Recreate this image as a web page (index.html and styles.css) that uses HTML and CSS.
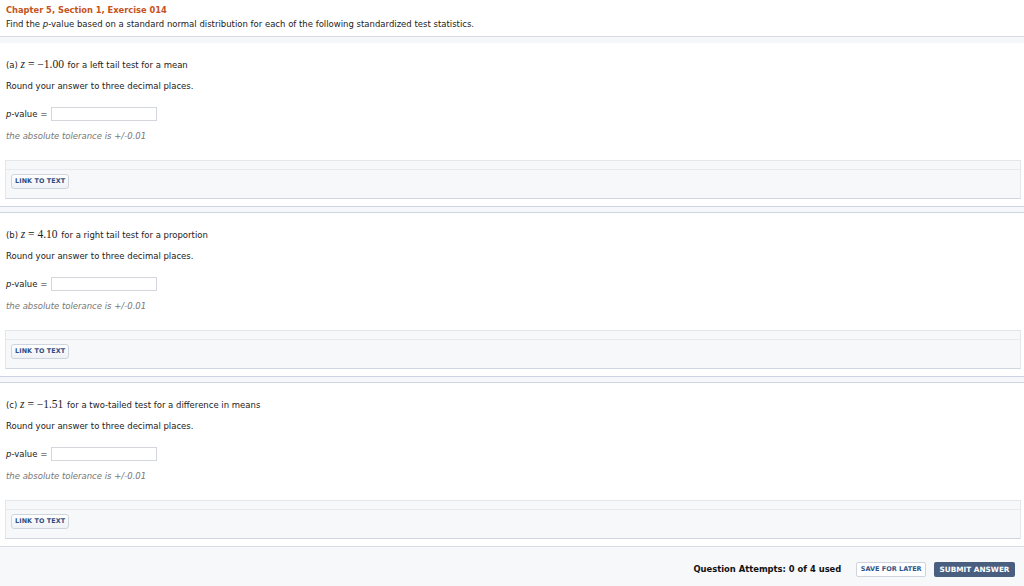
FILE: index.html
```html
<!DOCTYPE html>
<html>
<head>
<meta charset="utf-8">
<link rel="stylesheet" href="styles.css">
</head>
<body>
<div class="header">
  <div class="title">Chapter 5, Section 1, Exercise 014</div>
  <div class="desc">Find the <i>p</i>-value based on a standard normal distribution for each of the following standardized test statistics.</div>
</div>
<div class="band"></div>

<div class="part">
  <div class="q">(a) <span class="math"><i>z</i> = −1.00</span> for a left tail test for a mean</div>
  <div class="round">Round your answer to three decimal places.</div>
  <div class="ans"><span class="lbl"><i>p</i>-value =</span><span class="inp"></span></div>
  <div class="tol">the absolute tolerance is +/-0.01</div>
  <div class="box"><div class="boxhead"></div><div class="boxbody"><span class="btn">LINK TO TEXT</span></div></div>
  <div class="sep"></div>
</div>

<div class="part">
  <div class="q">(b) <span class="math"><i>z</i> = 4.10</span> for a right tail test for a proportion</div>
  <div class="round">Round your answer to three decimal places.</div>
  <div class="ans"><span class="lbl"><i>p</i>-value =</span><span class="inp"></span></div>
  <div class="tol">the absolute tolerance is +/-0.01</div>
  <div class="box"><div class="boxhead"></div><div class="boxbody"><span class="btn">LINK TO TEXT</span></div></div>
  <div class="sep"></div>
</div>

<div class="part">
  <div class="q">(c) <span class="math"><i>z</i> = −1.51</span> for a two-tailed test for a difference in means</div>
  <div class="round">Round your answer to three decimal places.</div>
  <div class="ans"><span class="lbl"><i>p</i>-value =</span><span class="inp"></span></div>
  <div class="tol">the absolute tolerance is +/-0.01</div>
  <div class="box"><div class="boxhead"></div><div class="boxbody"><span class="btn">LINK TO TEXT</span></div></div>
</div>

<div class="footer">
  <span class="attempts">Question Attempts: 0 of 4 used</span>
  <span class="save">SAVE FOR LATER</span>
  <span class="submit">SUBMIT ANSWER</span>
</div>
</body>
</html>
```
FILE: styles.css
```css
html, body {
  margin: 0;
  padding: 0;
  background: #fff;
}
body {
  font-family: "DejaVu Sans", Verdana, sans-serif;
  font-size: 8.5px;
  color: #222;
  height: 586px;
  overflow: hidden;
  display: flex;
  flex-direction: column;
}
.header {
  padding: 4px 6px 6px 6px;
  height: 26px;
  border-bottom: 1px solid #d6dde7;
}
.title {
  line-height: 12px;
  height: 12px;
  font-weight: bold;
  font-size: 8.3px;
  color: #c4531d;
}
.desc {
  margin-top: 2px;
  line-height: 12px;
  height: 12px;
}
.band {
  height: 6px;
  background: #f5f7fa;
}
.part {
  padding-top: 14px;
}
.q {
  padding-left: 6px;
  line-height: 14px;
  height: 14px;
  white-space: nowrap;
}
.math {
  font-family: "Liberation Serif", "Times New Roman", serif;
  font-size: 11.5px;
  margin-right: 1px;
}
.round {
  padding-left: 6px;
  margin-top: 9px;
  line-height: 12px;
  height: 12px;
}
.ans {
  margin-top: 15px;
  padding-left: 6px;
  height: 14px;
  display: flex;
  align-items: center;
}
.lbl {
  width: 45px;
  line-height: 14px;
}
.inp {
  width: 104px;
  height: 12px;
  border: 1px solid #d3d6db;
  background: #fff;
}
.tol {
  margin-top: 9px;
  padding-left: 6px;
  line-height: 12px;
  height: 12px;
  font-style: italic;
  color: #777;
}
.box {
  margin: 18px 3px 0 5px;
  border: 1px solid #e3e6eb;
  border-bottom-color: #cfd6e1;
  background: #f7f8fa;
}
.boxhead {
  height: 8px;
  border-bottom: 1px solid #e6e9ee;
}
.boxbody {
  height: 28px;
  padding-left: 5px;
  box-sizing: border-box;
  padding-top: 4px;
}
.btn {
  display: inline-block;
  height: 13px;
  line-height: 13px;
  padding: 0 3px;
  border: 1px solid #cfd5de;
  border-radius: 3px;
  background: linear-gradient(#ffffff, #eef1f6);
  font-size: 6.4px;
  font-weight: bold;
  color: #2f4f82;
  letter-spacing: 0.1px;
}
.sep {
  margin-top: 7px;
  height: 5px;
  border-top: 1px solid #ccd5e1;
  border-bottom: 1px solid #ccd5e1;
  background: #f5f7fa;
}
.footer {
  margin-top: 7px;
  flex: 1;
  border-top: 1px solid #d9dee6;
  background: #f7f8fa;
  display: flex;
  justify-content: flex-end;
  align-items: flex-start;
  padding: 15px 9px 0 0;
}
.attempts {
  font-weight: bold;
  font-size: 8.4px;
  line-height: 15px;
  color: #111;
  margin-right: 15px;
}
.save {
  display: inline-block;
  height: 13px;
  line-height: 13px;
  padding: 0 3.5px;
  border: 1px solid #cfd5de;
  border-radius: 2px;
  background: #fff;
  font-size: 6.5px;
  font-weight: bold;
  color: #34558a;
  margin-right: 8px;
}
.submit {
  display: inline-block;
  height: 15px;
  line-height: 15px;
  padding: 0 5.5px;
  border-radius: 2px;
  background: #4a5f80;
  font-size: 7.3px;
  font-weight: bold;
  color: #fff;
}
```
